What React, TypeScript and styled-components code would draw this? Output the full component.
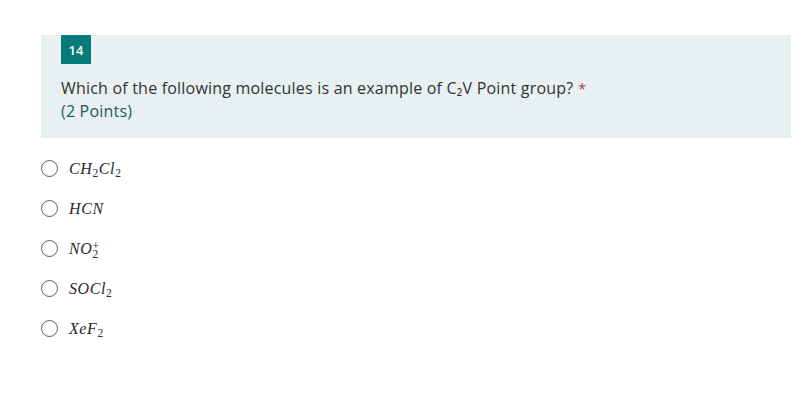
import React from "react";
import styled, { createGlobalStyle } from "styled-components";

const GlobalStyle = createGlobalStyle`
    body {
        margin: 0;
        background: #ffffff;
        font-family: "Open Sans", "Noto Sans", sans-serif;
    }
`;

const Page = styled.div`
    padding: 35px 20px 0 41px;
`;

const QuestionPanel = styled.div`
    width: 750px;
    height: 103px;
    box-sizing: border-box;
    background-color: #e8f0f2;
    padding: 0 20px;
`;

const Badge = styled.div`
    width: 30px;
    height: 29px;
    display: flex;
    align-items: center;
    justify-content: center;
    background-color: #077a7a;
    color: #ffffff;
    font-size: 13px;
    font-weight: 600;
    margin-bottom: 13px;
`;

const QuestionTitle = styled.div`
    font-size: 16px;
    letter-spacing: 0.2px;
    line-height: 22px;
    color: #333333;
`;

const Required = styled.span`
    color: #b03a3f;
    margin-left: 5px;
    font-size: 14px;
`;

const Points = styled.div`
    font-size: 16px;
    letter-spacing: 0.2px;
    line-height: 22px;
    color: #1e5b5c;
`;

const OptionList = styled.div`
    display: flex;
    flex-direction: column;
    gap: 23px;
    padding-top: 22px;
`;

const Option = styled.label`
    display: flex;
    align-items: center;
    gap: 11px;
    height: 17px;
    cursor: pointer;
`;

const Radio = styled.span`
    width: 17px;
    height: 17px;
    box-sizing: border-box;
    border: 1px solid #5a5a5a;
    border-radius: 50%;
    flex-shrink: 0;
`;

const Formula = styled.span`
    font-family: "Liberation Serif", "DejaVu Serif", serif;
    font-style: italic;
    font-size: 16px;
    color: #2a2a2a;
    letter-spacing: 0.6px;
`;

const Sub = styled.sub`
    font-style: normal;
    font-size: 11.5px;
    vertical-align: -3px;
    line-height: 0;
`;

const SupSub = styled.span`
    display: inline-block;
    vertical-align: -4px;
    font-style: normal;
    font-size: 11.5px;
    line-height: 8px;

    & > span {
        display: block;
    }
`;

const options: React.ReactNode[] = [
    <>CH<Sub>2</Sub>Cl<Sub>2</Sub></>,
    <>HCN</>,
    <>NO<SupSub><span>+</span><span>2</span></SupSub></>,
    <>SOCl<Sub>2</Sub></>,
    <>XeF<Sub>2</Sub></>,
];

const App: React.FC = () => {
    return (
        <Page>
            <GlobalStyle />
            <QuestionPanel>
                <Badge>14</Badge>
                <QuestionTitle>
                    Which of the following molecules is an example of C₂V Point group?
                    <Required>*</Required>
                </QuestionTitle>
                <Points>(2 Points)</Points>
            </QuestionPanel>
            <OptionList>
                {options.map((label, i) => (
                    <Option key={i}>
                        <Radio />
                        <Formula>{label}</Formula>
                    </Option>
                ))}
            </OptionList>
        </Page>
    );
};

export default App;
